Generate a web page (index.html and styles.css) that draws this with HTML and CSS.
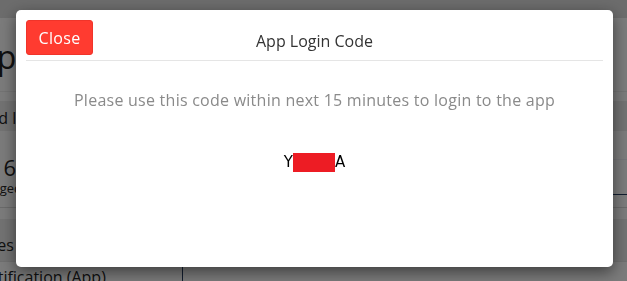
FILE: index.html
```html
<!DOCTYPE html>
<html>
<head>
<meta charset="utf-8">
<link rel="stylesheet" href="styles.css">
</head>
<body>
<div class="page">
  <div class="topbar"></div>
  <div class="page-head"><h1 class="page-title">App Users</h1></div>
  <div class="band band-a"><span class="cell cell-a">Used logins</span></div>
  <div class="row-b">
    <div class="stat">
      <div class="big">16</div>
      <div class="small">Logged in</div>
    </div>
    <div class="tabline"></div>
  </div>
  <div class="band band-c"><span class="cell cell-c">Devices</span></div>
  <div class="row-d">
    <div class="col1"><span class="cell cell-d">Notification (App)</span></div>
    <div class="col2"></div>
  </div>
</div>
<div class="overlay"></div>
<div class="modal">
  <div class="modal-head">
    <button class="btn-close">Close</button>
    <div class="modal-title">App Login Code</div>
    <div class="spacer"></div>
  </div>
  <div class="modal-body">
    <p class="msg">Please use this code within next 15 minutes to login to the app</p>
    <div class="code">Y<span class="redact"></span>A</div>
  </div>
</div>
</body>
</html>
```

FILE: styles.css
```css
* { box-sizing: border-box; }
html, body { margin: 0; padding: 0; }
body {
  width: 627px;
  height: 281px;
  overflow: hidden;
  font-family: "Open Sans", "Noto Sans", sans-serif;
  background: #f6f6f6;
  color: #333;
}
.page { width: 627px; height: 281px; overflow: hidden; }
.topbar { height: 18px; background: #d8d8d8; }
.page-head {
  height: 74px;
  border-bottom: 1px solid #e6e6e6;
  display: flex;
  align-items: center;
  overflow: hidden;
}
.page-title {
  margin: 0 0 0 -43px;
  font-weight: 400;
  font-size: 32px;
  color: #222;
  padding-top: 4px;
  white-space: nowrap;
}
.band { background: #e4e4e4; display: flex; align-items: center; overflow: hidden; }
.band-a { height: 30px; margin-top: 9px; }
.cell { font-size: 16px; color: #222; white-space: nowrap; }
.cell-a { margin-left: -30px; padding-top: 4px; }
.row-b {
  height: 77px;
  border-bottom: 1px solid #d4d4d4;
  display: flex;
  justify-content: space-between;
  overflow: hidden;
}
.stat { padding-top: 23px; }
.big { font-size: 22px; line-height: 26px; margin-left: -9px; color: #222; white-space: nowrap; }
.small { font-size: 13px; margin-left: -22px; color: #222; white-space: nowrap; line-height: 16px; }
.tabline {
  width: 14px;
  border-bottom: 1px solid #23395d;
  border-top: 1px solid #e9e9f0;
  margin-top: 28px;
  height: 36px;
}
.band-c { height: 42px; margin-top: 11px; }
.cell-c { margin-left: -43px; padding-top: 10px; }
.row-d { display: flex; height: 40px; border-top: 1px solid #ddd; }
.col1 {
  width: 183px;
  border-right: 1px solid #23395d;
  padding-top: 4px;
  overflow: hidden;
  white-space: nowrap;
}
.cell-d { margin-left: -24px; display: inline-block; }
.overlay {
  position: fixed;
  inset: 0;
  background: rgba(0, 0, 0, 0.5);
}
.modal {
  position: fixed;
  left: 16px;
  top: 10px;
  width: 597px;
  height: 257px;
  background: #fff;
  border-radius: 5px;
  box-shadow: 0 5px 15px rgba(0, 0, 0, 0.5);
}
.modal-head {
  margin: 0 10px;
  padding: 10px 0 5px;
  border-bottom: 1px solid #e5e5e5;
  display: grid;
  grid-template-columns: 1fr auto 1fr;
  align-items: center;
}
.btn-close {
  justify-self: start;
  width: 67px;
  height: 35px;
  border: 1px solid #f0342a;
  border-radius: 3px;
  background: #ff3b30;
  color: #fff;
  font-family: inherit;
  font-size: 16px;
  font-weight: 500;
  letter-spacing: 0.3px;
  padding: 0;
}
.modal-title {
  font-size: 16px;
  color: #333;
  padding-top: 6px;
}
.modal-body {
  padding: 28px 10px 0;
  text-align: center;
}
.msg {
  margin: 0;
  font-size: 16px;
  letter-spacing: 0.25px;
  color: #8a8a8a;
  line-height: 22px;
}
.code {
  margin-top: 41px;
  font-family: "DejaVu Sans", sans-serif;
  font-size: 15px;
  color: #000;
  line-height: 20px;
  display: flex;
  justify-content: center;
  align-items: center;
}
.redact {
  display: inline-block;
  width: 42px;
  height: 19px;
  background: #ed1c24;
}
```
